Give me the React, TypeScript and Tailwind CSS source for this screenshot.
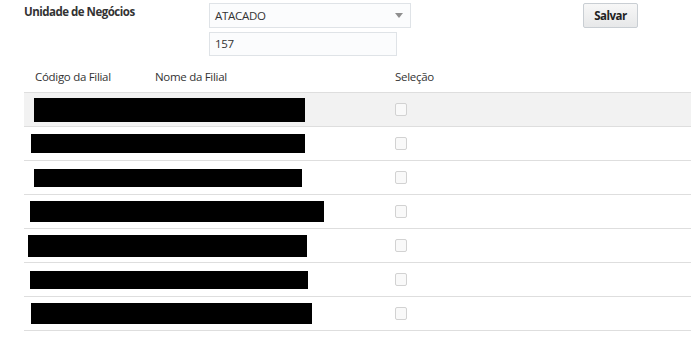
import React from "react";

const rows = [
  { bar: "ml-[10px] w-[271px] h-[24px]", bg: "bg-[#f2f2f2]" },
  { bar: "ml-[7px] w-[274px] h-[19px]", bg: "bg-white" },
  { bar: "ml-[10px] w-[268px] h-[18px]", bg: "bg-white" },
  { bar: "ml-[6px] w-[294px] h-[21px]", bg: "bg-white" },
  { bar: "ml-[4px] w-[279px] h-[22px]", bg: "bg-white" },
  { bar: "ml-[6px] w-[278px] h-[18px]", bg: "bg-white" },
  { bar: "ml-[7px] w-[281px] h-[21px]", bg: "bg-white" },
];

export default function App() {
  return (
    <div
      className="w-[691px] h-[338px] bg-white text-[#333333] text-[11.5px] tracking-[-0.3px] overflow-hidden"
      style={{ fontFamily: '"Open Sans", "Noto Sans", sans-serif' }}
    >
      <div className="flex pl-[24px] pt-[3px]">
        <div className="w-[185px] pt-[1px] font-bold leading-[16px] tracking-[-0.5px]">Unidade de Negócios</div>
        <div className="flex flex-col gap-[4px]">
          <div className="w-[202px] h-[25px] border border-[#dfe3e7] bg-[#fbfcfd] flex items-center justify-between pl-[5px] pr-[6px]">
            <span>ATACADO</span>
            <svg width="8" height="5" viewBox="0 0 8 5" className="mr-[1px]">
              <path d="M0 0 L8 0 L4 5 Z" fill="#8f8f8f" />
            </svg>
          </div>
          <div className="w-[188px] h-[24px] border border-[#dfe3e7] bg-[#fbfcfd] flex items-center pl-[5px]">
            157
          </div>
        </div>
        <button className="ml-[172px] w-[55px] h-[25px] border border-[#c9ced3] rounded-[2px] bg-gradient-to-b from-[#f7f7f7] to-[#e7e8e9] font-bold tracking-[-0.5px] text-[#222]">
          Salvar
        </button>
      </div>
      <div className="flex h-[36px] pl-[35px] pt-[14px] leading-[14px]">
        <div className="w-[120px]">Código da Filial</div>
        <div className="w-[240px]">Nome da Filial</div>
        <div>Seleção</div>
      </div>
      <div className="ml-[24px] border-t border-[#dedede]">
        {rows.map((r, i) => (
          <div key={i} className={`h-[34px] border-b border-[#dedede] flex items-center ${r.bg}`}>
            <div className="w-[371px] flex items-center">
              <div className={`bg-black ${r.bar}`} />
            </div>
            <div className="w-[12px] h-[13px] border border-[#d2d2d2] rounded-[2px] bg-[#f9f9f9]" />
          </div>
        ))}
      </div>
    </div>
  );
}
